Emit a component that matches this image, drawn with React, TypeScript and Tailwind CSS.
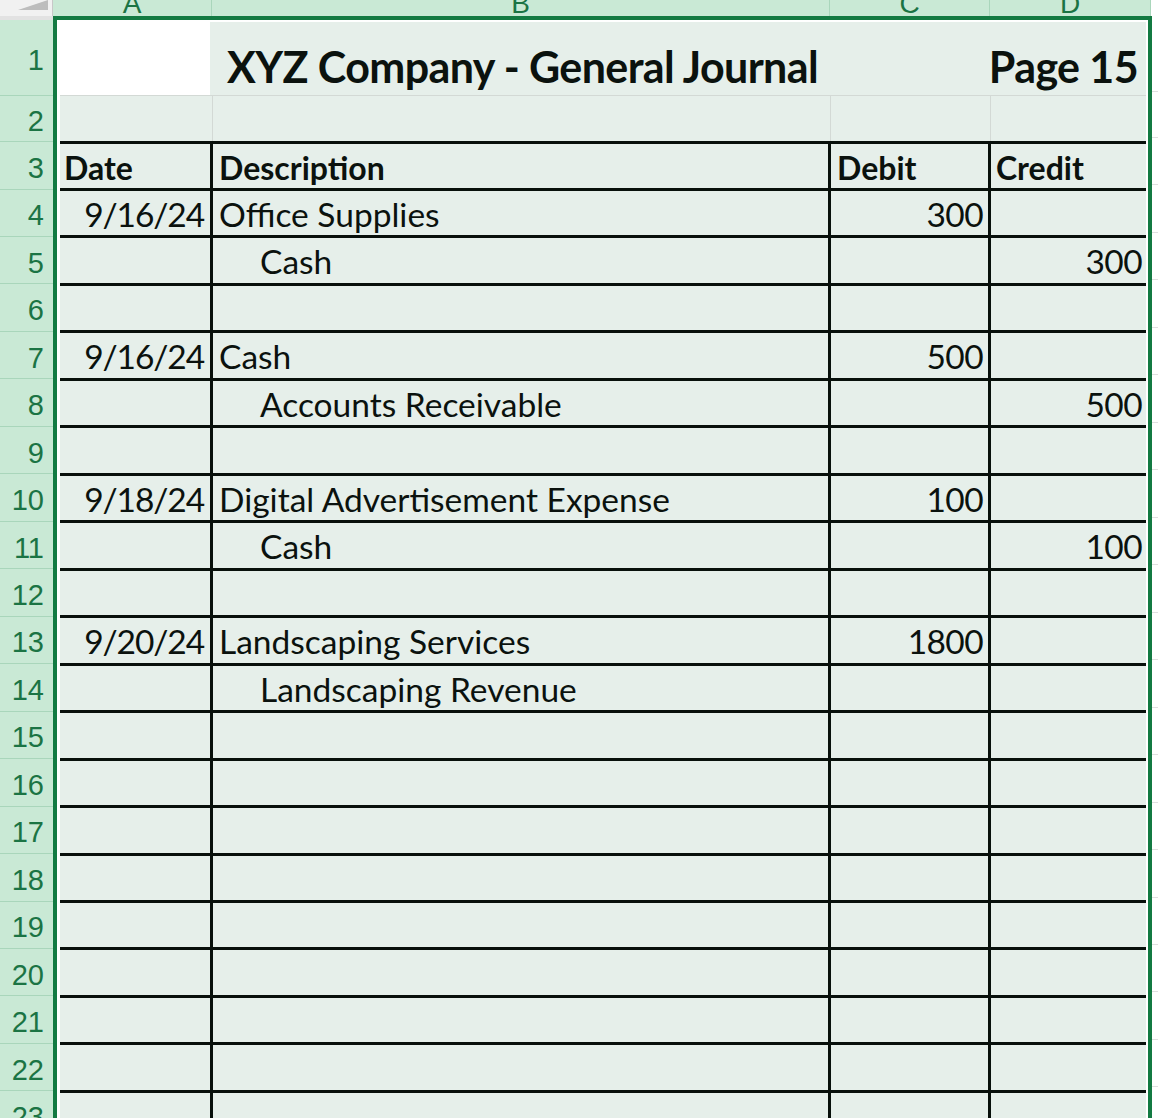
const GREEN = 'border-[#137a42]';

type Row = {
  date?: string;
  desc?: string;
  indent?: boolean;
  debit?: string;
  credit?: string;
};

const ROWS: Row[] = [
  { date: '9/16/24', desc: 'Office Supplies', debit: '300' },
  { desc: 'Cash', indent: true, credit: '300' },
  {},
  { date: '9/16/24', desc: 'Cash', debit: '500' },
  { desc: 'Accounts Receivable', indent: true, credit: '500' },
  {},
  { date: '9/18/24', desc: 'Digital Advertisement Expense', debit: '100' },
  { desc: 'Cash', indent: true, credit: '100' },
  {},
  { date: '9/20/24', desc: 'Landscaping Services', debit: '1800' },
  { desc: 'Landscaping Revenue', indent: true },
  {},
  {},
  {},
  {},
  {},
  {},
  {},
  {},
  {},
];

function ColHeaders() {
  return (
    <div className="flex h-[16px] font-['Liberation_Sans',Arial,sans-serif] text-[28px] text-[#1b7444]">
      <div className="relative w-[53px] border-r border-[#c8c8c8] bg-[#f1f1f1]">
        <svg className="absolute left-0 top-0" width="53" height="16">
          <polygon points="18,10 48,10 48,0" fill="#bdbdbd" />
        </svg>
      </div>
      {[
        ['A', 'w-[159px]'],
        ['B', 'w-[618px]'],
        ['C', 'w-[160px]'],
        ['D', 'w-[161px]'],
      ].map(([l, w]) => (
        <div
          key={l}
          className={`${w} overflow-hidden border-r border-[#a9d6bb] bg-[#c9e9d5] text-center`}
        >
          <div className="-mt-[10px] leading-[28px]">{l}</div>
        </div>
      ))}
      <div className="flex-1 bg-white" />
    </div>
  );
}

function RowHeaders() {
  const heights = ['h-[76px]', 'h-[46px]', 'h-[47.5px]'];
  const labels = Array.from({ length: 23 }, (_, i) => i + 1);
  return (
    <div className="w-[53px] shrink-0 font-['Liberation_Sans',Arial,sans-serif] text-[29px] text-[#1b7444]">
      <div className="h-[4px] bg-[#e2e2e2]" />
      {labels.map((n, i) => (
        <div
          key={n}
          className={`${heights[i] ?? 'h-[47.47px]'} flex items-center justify-end border-b border-[#a9d6bb] bg-[#c9e9d5] pr-[9px] pt-[6px] leading-none`}
        >
          {n}
        </div>
      ))}
    </div>
  );
}

function JournalRow({ row, bold }: { row: Row; bold?: boolean }) {
  const base = 'flex items-end border-r-[3px] border-[#08100b] leading-none';
  return (
    <div
      className={`flex h-[47.47px] border-b-[3px] border-[#08100b] ${bold ? 'text-[32px] font-bold' : ''}`}
    >
      <div
        className={`${base} w-[153px] ${bold ? 'pl-[4px]' : 'justify-end pr-[6px] tracking-[-1.1px]'} pb-[4px]`}
      >
        {row.date}
      </div>
      <div className={`${base} w-[618px] ${row.indent ? 'pl-[47px]' : 'pl-[6px]'} pb-[4px]`}>
        {row.desc}
      </div>
      <div
        className={`${base} w-[160px] ${bold ? 'pl-[6px]' : 'justify-end pr-[5px] tracking-[-0.6px]'} pb-[4px]`}
      >
        {row.debit}
      </div>
      <div
        className={`flex w-[155px] items-end leading-none ${bold ? 'pl-[5px]' : 'justify-end pr-[4px] tracking-[-0.6px]'} pb-[4px]`}
      >
        {row.credit}
      </div>
    </div>
  );
}

function Sheet() {
  return (
    <div
      className={`w-[1099px] shrink-0 border-l-4 border-r-4 border-t-4 ${GREEN} bg-white pl-[3px] pr-[2px] pt-[2px] font-['Lato','Open_Sans',sans-serif] text-[33.5px] text-[#0b120e]`}
    >
      {/* row 1: title */}
      <div className="flex h-[74px] border-b border-[#d3d9d5]">
        <div className="w-[150px] bg-white" />
        <div className="flex flex-1 items-end justify-between bg-[#e6efea] pb-[7px] pl-[17px] pr-[8px] text-[43px] font-bold leading-none tracking-[-0.6px]">
          <span>XYZ Company - General Journal</span>
          <span>Page 15</span>
        </div>
      </div>
      {/* row 2: blank */}
      <div className="flex h-[44.5px] bg-[#e6efea]">
        <div className="w-[153px] border-r border-[#d3d9d5]" />
        <div className="w-[618px] border-r border-[#d3d9d5]" />
        <div className="w-[160px] border-r border-[#d3d9d5]" />
        <div className="w-[155px]" />
      </div>
      <div className="border-t-[3px] border-[#08100b] bg-[#e6efea]">
        <JournalRow
          row={{ date: 'Date', desc: 'Description', debit: 'Debit', credit: 'Credit' }}
          bold
        />
        {ROWS.map((r, i) => (
          <JournalRow key={i} row={r} />
        ))}
      </div>
    </div>
  );
}

function Outside() {
  return (
    <div className="flex-1 bg-white">
      <div className="h-[76px] border-b border-[#e0e0e0]" />
      <div className="h-[46px] border-b border-[#e0e0e0]" />
      {Array.from({ length: 21 }).map((_, i) => (
        <div key={i} className="h-[47.47px] border-b border-[#e0e0e0]" />
      ))}
    </div>
  );
}

export default function App() {
  return (
    <div className="h-[1118px] w-[1158px] overflow-hidden bg-white">
      <ColHeaders />
      <div className="flex">
        <RowHeaders />
        <Sheet />
        <Outside />
      </div>
    </div>
  );
}
